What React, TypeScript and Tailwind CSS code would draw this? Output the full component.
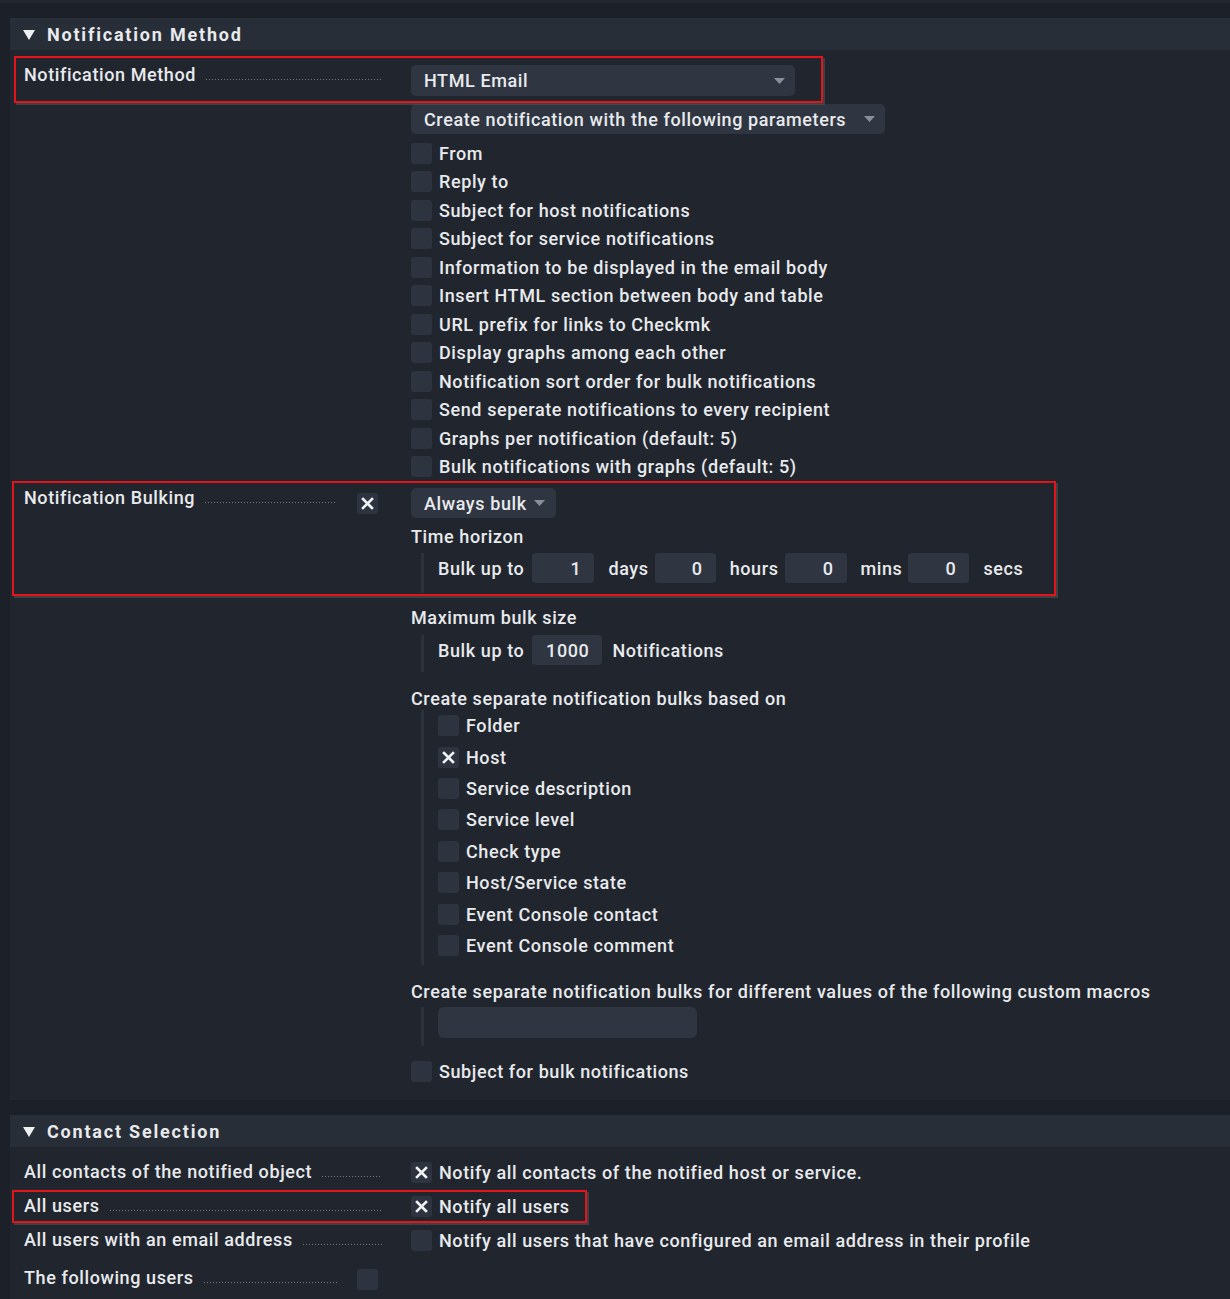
import type { ReactNode } from "react";

const checklist = [
  "From",
  "Reply to",
  "Subject for host notifications",
  "Subject for service notifications",
  "Information to be displayed in the email body",
  "Insert HTML section between body and table",
  "URL prefix for links to Checkmk",
  "Display graphs among each other",
  "Notification sort order for bulk notifications",
  "Send seperate notifications to every recipient",
  "Graphs per notification (default: 5)",
  "Bulk notifications with graphs (default: 5)",
];

const bulkBy: [string, boolean][] = [
  ["Folder", false],
  ["Host", true],
  ["Service description", false],
  ["Service level", false],
  ["Check type", false],
  ["Host/Service state", false],
  ["Event Console contact", false],
  ["Event Console comment", false],
];

function XMark() {
  return (
    <svg width="13" height="13" viewBox="0 0 13 13">
      <path d="M2 2L11 11M11 2L2 11" stroke="#f1f2f4" strokeWidth="2.6" strokeLinecap="square" />
    </svg>
  );
}

function Check({ checked = false }: { checked?: boolean }) {
  return (
    <span className="grid h-[21px] w-[21px] shrink-0 place-items-center rounded-[3px] bg-[#2d343f]">
      {checked && <XMark />}
    </span>
  );
}

function Arrow() {
  return (
    <svg width="11" height="6" viewBox="0 0 11 6">
      <path d="M0 0H11L5.5 6Z" fill="#8a9099" />
    </svg>
  );
}

function Select({ label, className }: { label: string; className: string }) {
  return (
    <div className={`flex h-[30px] items-center justify-between rounded-[5px] bg-[#2f3641] pl-[13px] ${className}`}>
      <span className="whitespace-nowrap">{label}</span>
      <Arrow />
    </div>
  );
}

function NumInput({ value, className }: { value: string; className: string }) {
  return (
    <span className={`flex h-[30px] items-center justify-end rounded-[4px] bg-[#2f3641] pr-[13px] ${className}`}>
      {value}
    </span>
  );
}

function Leader({ className = "" }: { className?: string }) {
  return (
    <span
      className={`mb-[5px] h-px flex-1 self-end bg-[linear-gradient(to_right,#737983_1px,transparent_1px)] bg-[length:3px_1px] bg-repeat-x ${className}`}
    />
  );
}

function Label({ text, end = 29, children }: { text: string; end?: number; children?: ReactNode }) {
  return (
    <div className="flex h-[20px] w-[401px] shrink-0 items-center pl-[14px]">
      <span className="flex h-[20px] min-w-0 flex-1 items-end">
        <span className="whitespace-nowrap leading-[20px]">{text}</span>
        <Leader className={end === 29 ? "ml-[10px] mr-[29px]" : "ml-[10px] mr-[20px]"} />
      </span>
      {children && <span className="mr-[33px]">{children}</span>}
    </div>
  );
}

function Indent({ children, className = "" }: { children: ReactNode; className?: string }) {
  return <div className={`ml-[10px] border-l-[3px] border-[#2c323c] pl-[14px] ${className}`}>{children}</div>;
}

function Header({ title }: { title: string }) {
  return (
    <div className="flex h-[32px] items-center bg-[#282e37] pl-[13px]">
      <svg width="12" height="10" viewBox="0 0 12 10" className="mr-[12px] mt-[2px]">
        <path d="M0 0H12L6 10Z" fill="#eef0f2" />
      </svg>
      <span className="text-[18px] font-bold tracking-[1.8px]">{title}</span>
    </div>
  );
}

export default function App() {
  return (
    <div className="relative min-h-screen bg-[#1c2028] font-[Roboto,'Liberation_Sans',sans-serif] text-[18px] font-medium tracking-[0.6px] text-[#e8eaed]">
      <div className="h-[3px] bg-[#23272f]" />
      <div className="pl-[10px] pt-[15px]">
        <section>
          <Header title="Notification Method" />
          <div className="bg-[#21262e] pb-[18px] pt-[15px]">
            <div className="flex">
              <Label text="Notification Method" />
              <div>
                <Select label="HTML Email" className="h-[31px] w-[384px] pr-[10px]" />
                <Select label="Create notification with the following parameters" className="mt-[8px] w-[474px] pr-[10px]" />
                <div className="mt-[5px]">
                  {checklist.map((item) => (
                    <div key={item} className="flex h-[28.5px] items-center gap-[7px]">
                      <Check />
                      <span>{item}</span>
                    </div>
                  ))}
                </div>
              </div>
            </div>

            <div className="flex pt-[7px]">
              <Label text="Notification Bulking" end={20}>
                <span className="mt-[10px] block">
                  <Check checked />
                </span>
              </Label>
              <div>
                <Select label="Always bulk" className="w-[145px] gap-[6px] pr-[11px]" />
                <div className="mt-[9px] leading-[20px]">Time horizon</div>
                <Indent className="mt-[6px] pb-[10px]">
                  <div className="flex h-[30px] items-center">
                    <span>Bulk up to</span>
                    <NumInput value="1" className="ml-[8px] w-[62px]" />
                    <span className="ml-[14px]">days</span>
                    <NumInput value="0" className="ml-[6px] w-[61px]" />
                    <span className="ml-[14px]">hours</span>
                    <NumInput value="0" className="ml-[6px] w-[62px]" />
                    <span className="ml-[14px]">mins</span>
                    <NumInput value="0" className="ml-[6px] w-[61px]" />
                    <span className="ml-[14px]">secs</span>
                  </div>
                </Indent>

                <div className="mt-[15px] leading-[20px]">Maximum bulk size</div>
                <Indent className="mt-[7px] pb-[7px]">
                  <div className="flex h-[30px] items-center">
                    <span>Bulk up to</span>
                    <NumInput value="1000" className="ml-[8px] w-[70px] pr-[8px]" />
                    <span className="ml-[10px]">Notifications</span>
                  </div>
                </Indent>

                <div className="mt-[17px] leading-[20px]">Create separate notification bulks based on</div>
                <Indent className="mt-[1px] pb-[4px]">
                  {bulkBy.map(([item, on]) => (
                    <div key={item} className="flex h-[31.4px] items-center gap-[7px]">
                      <Check checked={on} />
                      <span>{item}</span>
                    </div>
                  ))}
                </Indent>

                <div className="mt-[17px] whitespace-nowrap leading-[20px]">
                  Create separate notification bulks for different values of the following custom macros
                </div>
                <Indent className="mt-[5px] pb-[8px]">
                  <div className="h-[31px] w-[259px] rounded-[6px] bg-[#2f3641]" />
                </Indent>

                <div className="mt-[15px] flex h-[21px] items-center gap-[7px]">
                  <Check />
                  <span>Subject for bulk notifications</span>
                </div>
              </div>
            </div>
          </div>
        </section>

        <section className="mt-[15px]">
          <Header title="Contact Selection" />
          <div className="min-h-[152px] bg-[#21262e] pt-[8px]">
            <div className="flex h-[34px] items-center">
              <Label text="All contacts of the notified object" />
              <div className="flex items-center gap-[7px]">
                <Check checked />
                <span>Notify all contacts of the notified host or service.</span>
              </div>
            </div>
            <div className="flex h-[34px] items-center">
              <Label text="All users" />
              <div className="flex items-center gap-[7px]">
                <Check checked />
                <span>Notify all users</span>
              </div>
            </div>
            <div className="flex h-[34px] items-center">
              <Label text="All users with an email address" />
              <div className="flex items-center gap-[7px]">
                <Check />
                <span>Notify all users that have configured an email address in their profile</span>
              </div>
            </div>
            <div className="mt-[4px] flex h-[34px] items-center">
              <Label text="The following users" end={20}>
                <span className="block pt-[2px]">
                  <Check />
                </span>
              </Label>
            </div>
          </div>
        </section>
      </div>

      <div className="pointer-events-none absolute left-[14px] top-[56px] h-[47px] w-[809px] border-2 border-[#e5141b] shadow-[2px_2px_0_rgba(90,90,90,0.5)]" />
      <div className="pointer-events-none absolute left-[12px] top-[481px] h-[115px] w-[1044px] border-2 border-[#e5141b] shadow-[2px_2px_0_rgba(90,90,90,0.5)]" />
      <div className="pointer-events-none absolute left-[12px] top-[1190px] h-[33px] w-[575px] border-2 border-[#e5141b] shadow-[2px_2px_0_rgba(90,90,90,0.5)]" />
    </div>
  );
}
